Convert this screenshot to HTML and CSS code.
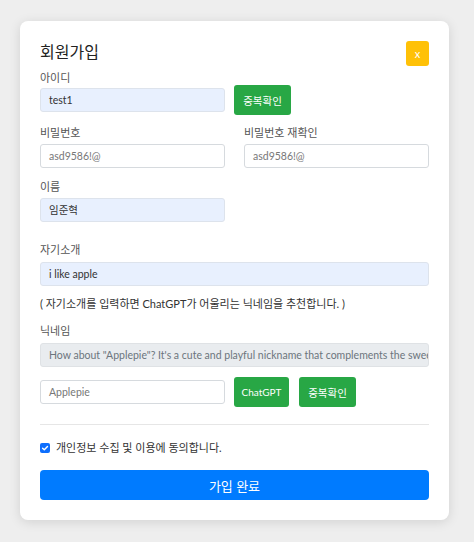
FILE: index.html
```html
<!DOCTYPE html>
<html lang="ko">
<head>
<meta charset="utf-8">
<title>회원가입</title>
<link rel="stylesheet" href="styles.css">
</head>
<body>
<div class="card">
  <div class="header">
    <h1 class="title">회원가입</h1>
    <button class="btn btn-close">x</button>
  </div>

  <div class="label first">아이디</div>
  <div class="row">
    <div class="field half autofill">test1</div>
    <button class="btn btn-green">중복확인</button>
  </div>

  <div class="cols">
    <div class="col">
      <div class="label">비밀번호</div>
      <div class="field placeholder">asd9586!@</div>
    </div>
    <div class="col">
      <div class="label">비밀번호 재확인</div>
      <div class="field placeholder">asd9586!@</div>
    </div>
  </div>

  <div class="label name-label">이름</div>
  <div class="field half autofill">임준혁</div>

  <div class="label intro-label">자기소개</div>
  <div class="field autofill">i like apple</div>

  <p class="help">( 자기소개를 입력하면 ChatGPT가 어울리는 닉네임을 추천합니다. )</p>

  <div class="label nick-label">닉네임</div>
  <div class="field readonly">How about "Applepie"? It's a cute and playful nickname that complements the sweet</div>

  <div class="row nick-row">
    <div class="field half placeholder">Applepie</div>
    <button class="btn btn-green btn-gpt">ChatGPT</button>
    <button class="btn btn-green btn-dup2">중복확인</button>
  </div>

  <hr class="divider">

  <label class="agree">
    <span class="check"><svg viewBox="0 0 10 10" width="10" height="10"><path d="M2.6 5.2 L4.3 6.8 L7.5 3.4" fill="none" stroke="#fff" stroke-width="1.4" stroke-linecap="round" stroke-linejoin="round"/></svg></span>
    <span>개인정보 수집 및 이용에 동의합니다.</span>
  </label>

  <button class="btn btn-submit">가입 완료</button>
</div>
</body>
</html>
```

FILE: styles.css
```css
* { box-sizing: border-box; }

body {
  margin: 0;
  background: #eeeeee;
  font-family: "Lato", "Noto Sans CJK KR", sans-serif;
  color: #333;
  width: 474px;
  height: 542px;
  overflow: hidden;
}

.card {
  margin: 21px 0 0 20px;
  width: 429px;
  background: #fff;
  border-radius: 8px;
  box-shadow: 0 2px 12px rgba(0, 0, 0, 0.12);
  padding: 20px;
}

.header {
  display: flex;
  justify-content: space-between;
  align-items: center;
  height: 25px;
}

.title {
  margin: 0;
  font-size: 16px;
  font-weight: 400;
  color: #222;
  line-height: 25px;
  position: relative;
  top: -2px;
}

.btn {
  font-family: "Lato", "Noto Sans CJK KR", sans-serif;
  border: none;
  border-radius: 3px;
  color: #fff;
  font-size: 10.5px;
  cursor: pointer;
  padding: 0;
}

.btn-close {
  width: 23px;
  height: 25px;
  background: #ffc107;
  font-size: 11px;
}

.btn-green {
  background: #28a745;
  height: 30px;
  width: 57px;
}

.btn-gpt {
  width: 55px;
  font-size: 10px;
}

.btn-dup2 { margin-left: 1px; }

.label {
  font-size: 11px;
  line-height: 14px;
  color: #555;
  margin-bottom: 4px;
}

.label.first {
  margin-top: 5px;
  margin-bottom: 0;
}

.row {
  display: flex;
  align-items: center;
  gap: 9px;
}

.field {
  height: 24px;
  border: 1px solid #d6dade;
  border-radius: 3px;
  font-size: 10.5px;
  line-height: 22px;
  padding: 0 8px;
  color: #333;
  white-space: nowrap;
  overflow: hidden;
  background: #fff;
}

.half { width: 185px; }

.autofill {
  background: #e8f0fe;
  border-color: #dde3ec;
}

.placeholder { color: #777; }

.readonly {
  background: #e9ecef;
  border-color: #dfe2e5;
  color: #6c757d;
}

.cols {
  display: flex;
  gap: 19px;
  margin-top: 11px;
}

.col { width: 185px; }

.name-label { margin-top: 12px; }
.intro-label { margin-top: 21px; margin-bottom: 5px; }

.help {
  margin: 11px 0 0 0;
  font-size: 11px;
  line-height: 14px;
  color: #333;
}

.nick-label { margin-top: 13px; margin-bottom: 5px; }

.nick-row {
  margin-top: 10px;
}

.divider {
  border: none;
  border-top: 1px solid #e6e6e6;
  margin: 17px 0 0 0;
}

.agree {
  display: flex;
  align-items: center;
  gap: 6px;
  margin-top: 15px;
  font-size: 11px;
  line-height: 16px;
  color: #333;
}

.check {
  width: 10px;
  height: 10px;
  border-radius: 2px;
  background: #0d6efd;
  display: flex;
}

.btn-submit {
  display: block;
  width: 100%;
  height: 30px;
  margin-top: 14px;
  background: #007bff;
  font-size: 13px;
  border-radius: 4px;
}
```
